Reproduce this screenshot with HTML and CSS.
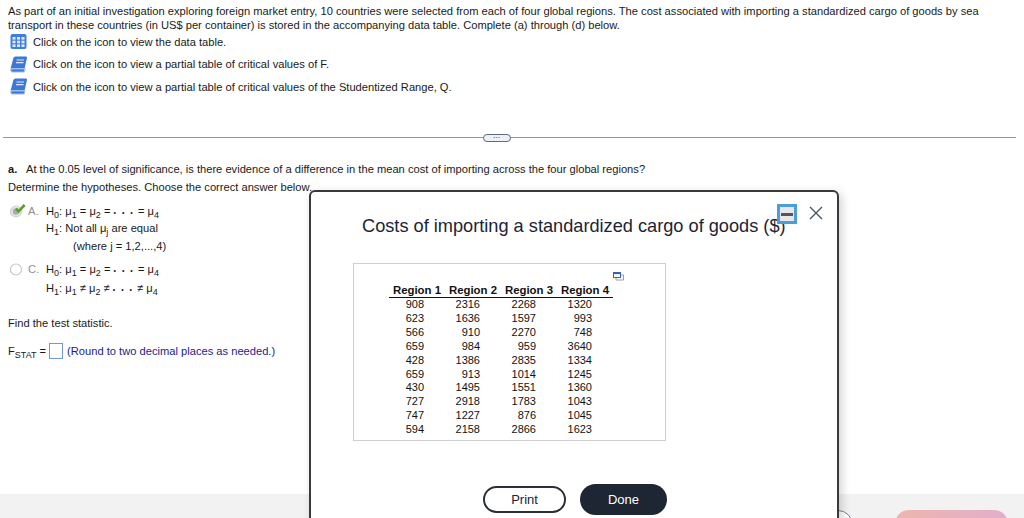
FILE: index.html
```html
<!DOCTYPE html>
<html lang="en">
<head>
<meta charset="utf-8">
<title>Costs of importing</title>
<link rel="stylesheet" href="styles.css">
</head>
<body>
<div class="page">
  <main class="main">
    <p class="intro">As part of an initial investigation exploring foreign market entry, 10 countries were selected from each of four global regions. The cost associated with importing a standardized cargo of goods by sea transport in these countries (in US$ per container) is stored in the accompanying data table. Complete (a) through (d) below.</p>
    <div class="resources">
      <div class="res first"><svg class="ic" viewBox="0 0 17 17"><rect x="0.5" y="1" width="16" height="15" rx="2" fill="#3f7fdc"/><g fill="#dfe9fb"><rect x="2.5" y="4" width="3" height="2.6"/><rect x="7" y="4" width="3" height="2.6"/><rect x="11.5" y="4" width="3" height="2.6"/><rect x="2.5" y="7.7" width="3" height="2.6"/><rect x="7" y="7.7" width="3" height="2.6"/><rect x="11.5" y="7.7" width="3" height="2.6"/><rect x="2.5" y="11.4" width="3" height="2.6"/><rect x="7" y="11.4" width="3" height="2.6"/><rect x="11.5" y="11.4" width="3" height="2.6"/></g></svg><span>Click on the icon to view the data table.</span></div>
      <div class="res"><svg class="ic" viewBox="0 0 17 17"><path d="M5.5 0.5h10.5Q17.2 0.5 17 1.8L14.6 12.5H0.6L3.4 2Q3.9 0.5 5.5 0.5z" fill="#3d78d6"/><path d="M0.6 12.5Q-0.4 16.5 2.5 16.5H13.5Q14.5 16.5 14.8 15.5L15.6 12.5z" fill="#9dbcec"/><path d="M1.4 13.6Q1 15.5 3 15.5H13.6L14.1 13.6z" fill="#3d78d6"/><path d="M6.5 4h7.5M6 6.6h7.5" stroke="#dfe9fb" stroke-width="1.2"/></svg><span>Click on the icon to view a partial table of critical values of F.</span></div>
      <div class="res"><svg class="ic" viewBox="0 0 17 17"><path d="M5.5 0.5h10.5Q17.2 0.5 17 1.8L14.6 12.5H0.6L3.4 2Q3.9 0.5 5.5 0.5z" fill="#3d78d6"/><path d="M0.6 12.5Q-0.4 16.5 2.5 16.5H13.5Q14.5 16.5 14.8 15.5L15.6 12.5z" fill="#9dbcec"/><path d="M1.4 13.6Q1 15.5 3 15.5H13.6L14.1 13.6z" fill="#3d78d6"/><path d="M6.5 4h7.5M6 6.6h7.5" stroke="#dfe9fb" stroke-width="1.2"/></svg><span>Click on the icon to view a partial table of critical values of the Studentized Range, Q.</span></div>
    </div>
    <div class="divider"><span class="rule left"></span><button class="more">•••</button><span class="rule"></span></div>
    <p class="question"><b class="part">a.</b>At the 0.05 level of significance, is there evidence of a difference in the mean cost of importing across the four global regions?</p>
    <p class="determine">Determine the hypotheses. Choose the correct answer below.</p>
    <div class="choice">
      <svg class="radio" viewBox="0 0 18 14"><circle cx="6" cy="7.5" r="5.5" fill="#e4e6e6" stroke="#cfd2d3" stroke-width="1.2"/><circle cx="6" cy="7.5" r="3.2" fill="#a9adae"/><path d="M6 4.6l2.6 2.8L14.6 1" fill="none" stroke="#55a02b" stroke-width="2.6"/></svg>
      <span class="letter">A.</span>
      <div class="hyp">
        <div class="hl h1">H<sub>0</sub>: μ<sub>1</sub> = μ<sub>2</sub> = <span class="dots">• • •</span> = μ<sub>4</sub></div>
        <div class="hl h2">H<sub>1</sub>: Not all μ<sub>j</sub> are equal</div>
        <div class="hl h3">(where j = 1,2,...,4)</div>
      </div>
    </div>
    <div class="choice second">
      <svg class="radio" viewBox="0 0 18 14"><circle cx="6" cy="7.5" r="5.5" fill="#fff" stroke="#c4c8c9" stroke-width="1.2"/></svg>
      <span class="letter">C.</span>
      <div class="hyp">
        <div class="hl h1">H<sub>0</sub>: μ<sub>1</sub> = μ<sub>2</sub> = <span class="dots">• • •</span> = μ<sub>4</sub></div>
        <div class="hl h2b">H<sub>1</sub>: μ<sub>1</sub> ≠ μ<sub>2</sub> ≠ <span class="dots">• • •</span> ≠ μ<sub>4</sub></div>
      </div>
    </div>
    <p class="find">Find the test statistic.</p>
    <div class="answer"><span>F<sub>STAT</sub> =</span><span class="box"></span><span class="hint">(Round to two decimal places as needed.)</span></div>
  </main>
  <footer class="footer"><span class="round"></span><span class="next"></span></footer>
</div>

<section class="modal">
  <div class="controls">
    <span class="min"><i></i></span>
    <svg class="close" viewBox="0 0 14 14"><path d="M1 1l12 12M13 1L1 13" stroke="#4b5563" stroke-width="1.4" fill="none"/></svg>
  </div>
  <h2 class="title">Costs of importing a standardized cargo of goods ($)</h2>
  <div class="tablebox">
    <svg class="copy" viewBox="0 0 11 9"><rect x="0.5" y="0.5" width="7" height="5" fill="#fff" stroke="#3a62b5"/><rect x="0.5" y="0.5" width="7" height="1.6" fill="#3a62b5"/><path d="M8 3h2.5v5H3V6" fill="none" stroke="#8c9cc4"/></svg>
    <table class="data">
      <thead><tr><th>Region 1</th><th>Region 2</th><th>Region 3</th><th>Region 4</th></tr></thead>
      <tbody>
        <tr><td>908</td><td>2316</td><td>2268</td><td>1320</td></tr>
        <tr><td>623</td><td>1636</td><td>1597</td><td>993</td></tr>
        <tr><td>566</td><td>910</td><td>2270</td><td>748</td></tr>
        <tr><td>659</td><td>984</td><td>959</td><td>3640</td></tr>
        <tr><td>428</td><td>1386</td><td>2835</td><td>1334</td></tr>
        <tr><td>659</td><td>913</td><td>1014</td><td>1245</td></tr>
        <tr><td>430</td><td>1495</td><td>1551</td><td>1360</td></tr>
        <tr><td>727</td><td>2918</td><td>1783</td><td>1043</td></tr>
        <tr><td>747</td><td>1227</td><td>876</td><td>1045</td></tr>
        <tr><td>594</td><td>2158</td><td>2866</td><td>1623</td></tr>
      </tbody>
    </table>
  </div>
  <div class="actions">
    <button class="print">Print</button>
    <button class="done">Done</button>
  </div>
</section>
</body>
</html>
```

FILE: styles.css
```css
* { box-sizing: border-box; }
html, body { margin: 0; height: 518px; overflow: hidden; background: #fff; }
body { font-family: "Liberation Sans", Arial, sans-serif; font-size: 11.15px; color: #1a1a1a; position: relative; }
p { margin: 0; }
sub { font-size: 9px; line-height: 0; vertical-align: -2.5px; }
.page { height: 518px; display: flex; flex-direction: column; }
.main { flex: 1; padding: 4px 8px 0; }
.intro { line-height: 14px; width: 985px; }
.resources { margin-top: 1px; }
.res { display: flex; align-items: center; height: 17px; gap: 6px; margin-bottom: 5.6px; margin-left: 2px; }
.ic { width: 17px; height: 17px; flex: none; }
.divider { display: flex; align-items: center; margin: 38px 0 0 -5px; width: 1013px; height: 9px; }
.rule { flex: 1; height: 1px; background: #8f97a3; }
.rule.left { flex: none; width: 480px; }
.more { width: 28px; height: 8px; padding: 0; border: 1px solid #5d6b7d; border-radius: 4px; background: #eef2f6; color: #444; font-size: 4px; line-height: 6px; letter-spacing: 1px; }
.question { margin-top: 20px; line-height: 14px; }
.part { display: inline-block; width: 18px; }
.determine { margin-top: 4px; line-height: 14px; }
.choice { display: flex; margin-top: 10px; margin-left: 2px; }
.choice.second { margin-top: 9px; }
.radio { width: 18px; height: 14px; flex: none; }
.letter { width: 18px; color: #8a9299; line-height: 14px; }
.hl { line-height: 14px; white-space: nowrap; }
.h2 { margin-top: 1px; }
.h2b { margin-top: 3px; }
.h3 { margin-top: 4px; padding-left: 27px; }
.dots { font-size: 7px; letter-spacing: 2px; }
.find { margin-top: 19px; line-height: 14px; }
.answer { display: flex; align-items: center; margin-top: 13px; height: 16px; gap: 3px; }
.box { width: 14px; height: 16px; border: 1px solid #6f97dd; background: #fff; }
.hint { color: #1c1c8c; margin-left: 1px; }
.footer { height: 24px; flex: none; background: #f2f2f2; display: flex; justify-content: flex-end; align-items: flex-start; gap: 42px; padding: 16px 16px 0 0; overflow: hidden; }
.round { width: 30px; height: 30px; border: 1px solid #7b8490; border-radius: 50%; background: #fff; flex: none; }
.next { width: 113px; height: 30px; border-radius: 14px; background: linear-gradient(90deg, #edb6ae, #e2aecb); flex: none; }
.modal { position: absolute; left: 309px; top: 190px; width: 530px; height: 340px; background: #fff; border: 2px solid #3a3a3a; border-radius: 6px; box-shadow: 3px 3px 10px rgba(0,0,0,.18); padding: 0 0 0 42px; }
.controls { position: absolute; top: 12px; right: 14px; display: flex; align-items: flex-start; gap: 12px; z-index: 1; }
.min { width: 20px; height: 20px; border: 3px solid #4d9dd8; background: #e7e7ec; display: flex; align-items: center; justify-content: center; }
.min i { display: block; width: 12px; height: 3px; background: #555; }
.close { width: 14px; height: 14px; margin-top: 2px; }
.title { margin: 22px 0 0 9px; font-size: 18.2px; font-weight: 400; line-height: 24px; color: #1d2433; white-space: nowrap; }
.tablebox { position: relative; margin: 25px 0 0 0; width: 313px; height: 178px; border: 1px solid #cfcfcf; padding: 20px 0 0 35px; color: #111; }
.copy { position: absolute; top: 8px; right: 41px; width: 11px; height: 9px; }
.data { border-collapse: collapse; table-layout: fixed; width: 224px; font-size: 11px; }
.data th { font-weight: 700; font-size: 11.4px; height: 13px; line-height: 13px; padding: 0; text-align: center; border-bottom: 1px solid #111; }
.data td { height: 13.9px; line-height: 13.9px; padding: 0 21px 0 0; text-align: right; }
.actions { display: flex; align-items: center; gap: 14px; margin: 43px 0 0 130px; }
button { font-family: "Liberation Sans", Arial, sans-serif; }
.print { width: 83px; height: 27px; border: 2px solid #2a2f38; border-radius: 14px; background: #fff; color: #1d2433; font-size: 13px; padding: 0; }
.done { width: 87px; height: 31px; border: 0; border-radius: 16px; background: #1f2633; color: #fff; font-size: 13px; padding: 0; }
```
